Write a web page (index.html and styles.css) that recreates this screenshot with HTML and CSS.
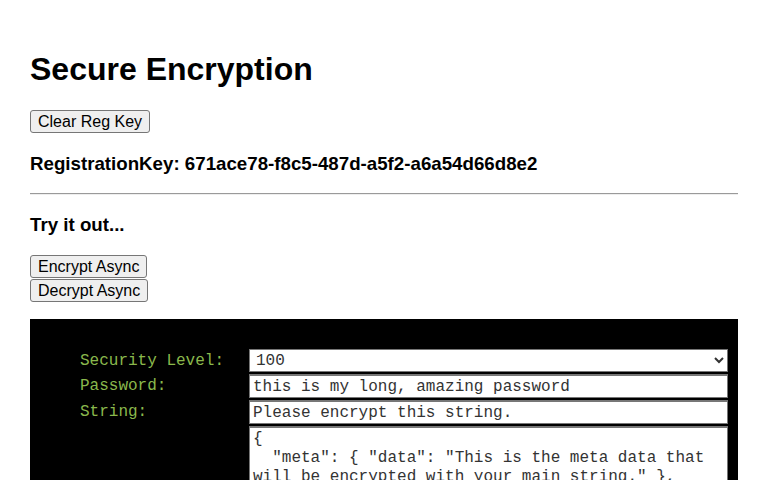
FILE: index.html
```html
<!DOCTYPE html>
<html>
<head>
<meta charset="utf-8">
<title>Secure Encryption</title>
<link rel="stylesheet" href="styles.css">
</head>
<body>
<h1 class="title">Secure Encryption</h1>
<button class="btn">Clear Reg Key</button>
<h3 class="subhead key">RegistrationKey: 671ace78-f8c5-487d-a5f2-a6a54d66d8e2</h3>
<hr class="rule">
<h3 class="subhead try">Try it out...</h3>
<div class="actions">
  <button class="btn">Encrypt Async</button>
  <button class="btn">Decrypt Async</button>
</div>
<div class="console">
  <div class="form">
    <label class="lbl">Security Level:</label>
    <select class="field sel"><option>100</option></select>
    <label class="lbl">Password:</label>
    <input class="field" type="text" value="this is my long, amazing password">
    <label class="lbl">String:</label>
    <input class="field" type="text" value="Please encrypt this string.">
    <span class="lbl"></span>
    <textarea class="field area">{
  "meta": { "data": "This is the meta data that will be encrypted with your main string." },
  "more": "data"
}</textarea>
  </div>
</div>
</body>
</html>
```
FILE: styles.css
```css
html, body {
  margin: 0;
  background: #fff;
}
body {
  padding: 30px 30px 0 30px;
  font-family: "Liberation Sans", Arial, sans-serif;
  color: #000;
}
.title {
  font-size: 32px;
  font-weight: bold;
  margin: 21.44px 0;
  line-height: 37px;
}
.btn {
  font-family: "Liberation Sans", Arial, sans-serif;
  font-size: 16px;
  line-height: 19px;
  padding: 1px 7px;
  background: #efefef;
  color: #000;
  border: 1px solid #767676;
  border-radius: 3px;
  display: block;
}
.subhead {
  font-size: 18.72px;
  font-weight: bold;
  margin: 18.72px 0;
  line-height: 22px;
}
.key {
  margin-top: 19.7px;
}
.rule {
  border: none;
  border-top: 1px solid #9a9a9a;
  border-bottom: 1px solid #eee;
  margin: 0;
}
.try {
  margin-top: 19px;
  margin-bottom: 19px;
}
.actions {
  display: flex;
  flex-direction: column;
  align-items: flex-start;
  gap: 1px;
  margin-bottom: 17px;
}
.console {
  background: #000;
  padding: 30px 10px 20px 50px;
  height: 200px;
}
.form {
  display: grid;
  grid-template-columns: 169px 1fr;
  row-gap: 2px;
  align-items: center;
}
.lbl {
  font-family: "Liberation Mono", "Courier New", monospace;
  font-size: 16px;
  color: #8ab84c;
  align-self: center;
}
.field {
  font-family: "Liberation Mono", "Courier New", monospace;
  font-size: 16px;
  color: #333;
  background: #fff;
  border: 1px solid #767676;
  border-top: 2px solid #777;
  margin: 0;
  padding: 0 3px;
  height: 24px;
  box-sizing: border-box;
  width: 100%;
}
.sel {
  border: 1px solid #767676;
  padding: 0 2px;
  height: 23px;
}
.area {
  height: 120px;
  resize: none;
  padding: 2px 3px;
  line-height: 19px;
  align-self: start;
}
```
